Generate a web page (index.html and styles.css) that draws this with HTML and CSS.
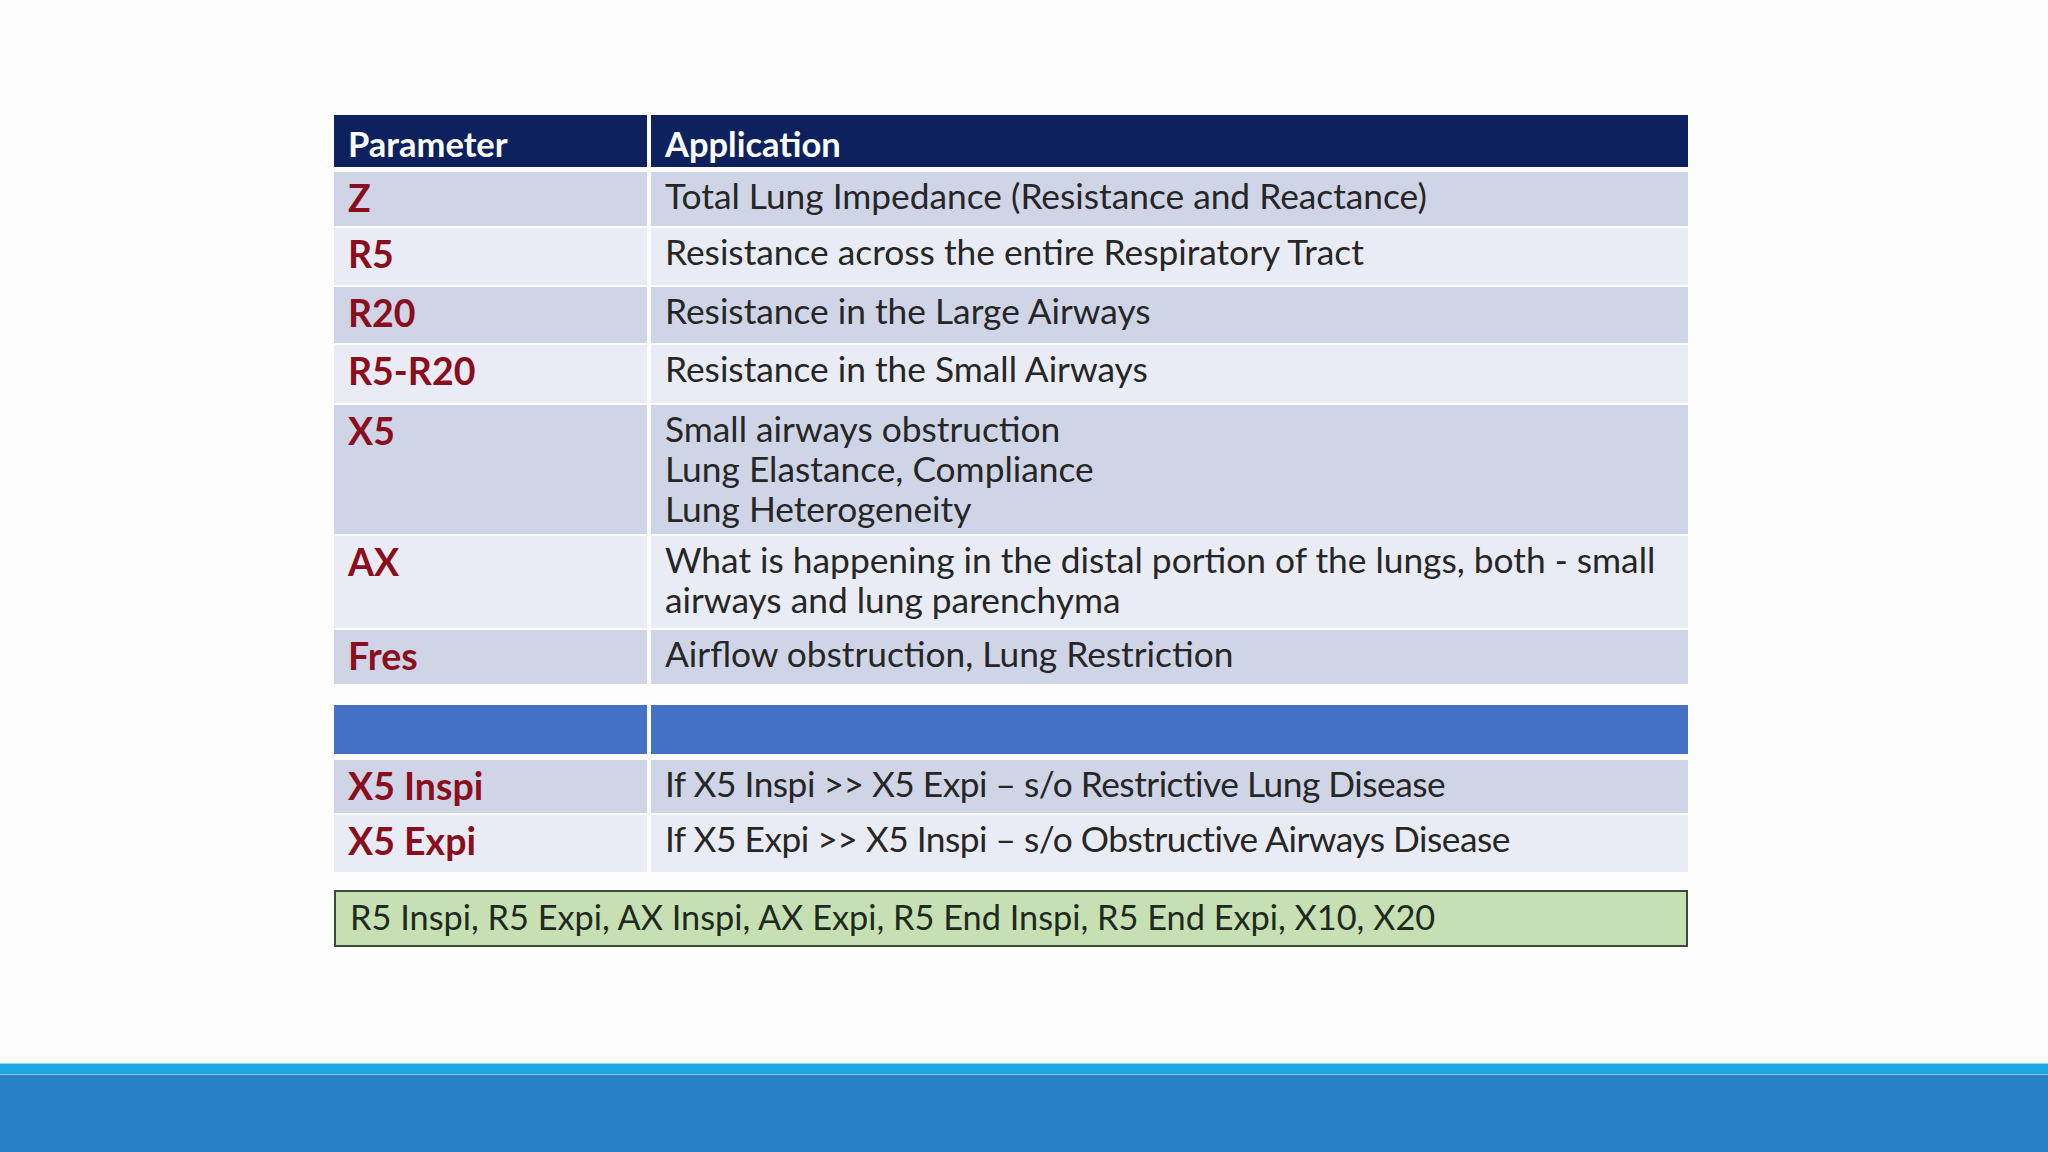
FILE: index.html
```html
<!DOCTYPE html>
<html>
<head>
<meta charset="utf-8">
<link rel="stylesheet" href="styles.css">
</head>
<body>
<div class="slide">
  <div class="content">
    <div class="tbl">
      <div class="row head"><div class="c p">Parameter</div><div class="c a">Application</div></div>
      <div class="row odd h54"><div class="c p">Z</div><div class="c a">Total Lung Impedance (Resistance and Reactance)</div></div>
      <div class="row even h57"><div class="c p">R5</div><div class="c a">Resistance across the entire Respiratory Tract</div></div>
      <div class="row odd h56"><div class="c p">R20</div><div class="c a">Resistance in the Large Airways</div></div>
      <div class="row even h58"><div class="c p">R5-R20</div><div class="c a">Resistance in the Small Airways</div></div>
      <div class="row odd h129"><div class="c p">X5</div><div class="c a">Small airways obstruction<br>Lung Elastance, Compliance<br>Lung Heterogeneity</div></div>
      <div class="row even h92"><div class="c p">AX</div><div class="c a">What is happening in the distal portion of the lungs, both - small airways and lung parenchyma</div></div>
      <div class="row odd h54"><div class="c p">Fres</div><div class="c a">Airflow obstruction, Lung Restriction</div></div>
    </div>
    <div class="tbl tbl2">
      <div class="row head2"><div class="c p"></div><div class="c a"></div></div>
      <div class="row odd h53"><div class="c p">X5 Inspi</div><div class="c a tight">If X5 Inspi &gt;&gt; X5 Expi – s/o Restrictive Lung Disease</div></div>
      <div class="row even h57"><div class="c p">X5 Expi</div><div class="c a tight">If X5 Expi &gt;&gt; X5 Inspi – s/o Obstructive Airways Disease</div></div>
    </div>
    <div class="note">R5 Inspi, R5 Expi, AX Inspi, AX Expi, R5 End Inspi, R5 End Expi, X10, X20</div>
  </div>
</div>
<div class="footer">
  <div class="stripe"></div>
  <div class="band"></div>
</div>
</body>
</html>
```
FILE: styles.css
```css
html, body {
  margin: 0;
  padding: 0;
  background: #fdfdfe;
  width: 2048px;
  height: 1152px;
  overflow: hidden;
  font-family: "Lato", "Liberation Sans", sans-serif;
}

.slide {
  height: 1063px;
  box-sizing: border-box;
  padding: 115px 0 0 334px;
}

.content {
  width: 1354px;
  display: flex;
  flex-direction: column;
}

.tbl {
  display: flex;
  flex-direction: column;
  gap: 2px;
}

.tbl2 {
  margin-top: 21px;
}

.row {
  display: grid;
  grid-template-columns: 313px 1fr;
  column-gap: 4px;
}

.row .c {
  box-sizing: border-box;
  padding: 4px 0 0 14px;
  line-height: 40px;
  font-size: 35.3px;
  color: #262626;
}

.row .p {
  font-weight: 700;
  color: #8a0f1e;
  font-size: 37.5px;
  padding-top: 6px;
}

.row .a {
  padding-left: 14px;
}

.row .tight {
  letter-spacing: -0.5px;
}

.head {
  height: 52px;
  margin-bottom: 3px;
}
.head .c {
  background: #0d215f;
  color: #ffffff;
  font-weight: 700;
  font-size: 34.5px;
  padding-top: 9px;
}

.head2 {
  height: 49px;
  margin-bottom: 4px;
}
.head2 .c {
  background: #4571c4;
}

.odd .c { background: #cfd5e6; }
.even .c { background: #e9ebf5; }

.h53 { height: 53px; }
.h54 { height: 54px; }
.h56 { height: 56px; }
.h57 { height: 57px; }
.h58 { height: 58px; }
.h92 { height: 92px; }
.h129 { height: 129px; }

.note {
  margin-top: 18px;
  height: 57px;
  box-sizing: border-box;
  border: 2px solid #3e4a3c;
  background: #c6e0b4;
  color: #1f2a1f;
  font-size: 34.3px;
  line-height: 50px;
  padding-left: 14px;
}

.footer {
  height: 89px;
  display: flex;
  flex-direction: column;
}
.stripe {
  height: 10px;
  background: #1ba8e2;
  border-top: 1px solid #8fd6f2;
  border-bottom: 1px solid #8fc4e8;
}
.band {
  flex: 1;
  background: #2681c5;
}
```
